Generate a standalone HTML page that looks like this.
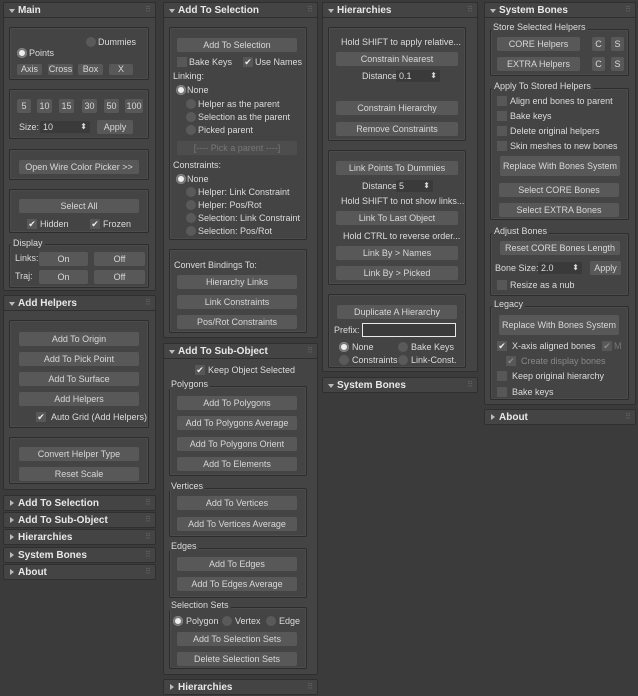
<!DOCTYPE html>
<html><head><meta charset="utf-8"><style>
*{margin:0;padding:0;box-sizing:border-box}
body{width:638px;height:696px;background:#3b3b3b;position:relative;overflow:hidden;font-family:"Liberation Sans",sans-serif;font-size:9px;color:#dcdcdc}
div{position:absolute}
.p{background:#444;border:1px solid #2f2f2f;border-radius:2px}
.h{background:#444;border:1px solid #2f2f2f;border-radius:2px;height:16px;font-weight:bold;font-size:10px;color:#e8e8e8;padding:2px 0 0 14px;white-space:nowrap}
.h:before{content:"";position:absolute;left:5px;top:6px;border-left:3px solid transparent;border-right:3px solid transparent;border-top:4px solid #bbb}
.h.c:before{left:6px;top:4px;border-top:3px solid transparent;border-bottom:3px solid transparent;border-left:4px solid #bbb;border-right:0}
.h:after{content:"⠿";position:absolute;right:4px;top:2px;font-size:8px;color:#666;font-weight:normal}
.g{border:1px solid #2c2c2c;border-radius:2px;box-shadow:inset 0 0 0 1px #4c4c4c}
.b{background:#585858;border-radius:2px;text-align:center;color:#d8d8d8;white-space:nowrap;line-height:14px;height:14px}
.dis{color:#777;background:#4d4d4d}
.t{white-space:nowrap;line-height:11px}
.r{width:10px;height:10px;border-radius:50%;background:#5a5a5a}
.r.on{background:#eee;box-shadow:0 0 0 2px #777 inset}
.k{width:10px;height:10px;background:#575757;font-size:9px;line-height:10px;text-align:center;color:#eee}
.sp{background:#3a3a3a;border-radius:1px;height:12px;line-height:12px;padding-left:3px;color:#ddd}
.sp:after{content:"⬍";position:absolute;right:3px;top:0;font-size:8px}
.lb{background:#444;padding:0 2px;line-height:10px}
</style></head><body>

<!-- column 1 -->
<div class="p" style="left:3px;top:2px;width:153px;height:289px"></div>
<div class="h" style="left:3px;top:2px;width:153px">Main</div>
<div class="g" style="left:9px;top:27px;width:140px;height:53px"></div>
<div class="r" style="left:86px;top:37px"></div><div class="t" style="left:98px;top:37px">Dummies</div>
<div class="r on" style="left:17px;top:48px"></div><div class="t" style="left:29px;top:48px">Points</div>
<div class="b" style="left:17px;top:64px;width:25px;height:11px;line-height:11px">Axis</div>
<div class="b" style="left:48px;top:64px;width:25px;height:11px;line-height:11px">Cross</div>
<div class="b" style="left:78px;top:64px;width:25px;height:11px;line-height:11px">Box</div>
<div class="b" style="left:109px;top:64px;width:24px;height:11px;line-height:11px">X</div>
<div class="g" style="left:9px;top:89px;width:140px;height:50px"></div>
<div class="b" style="left:17px;top:99px;width:14px">5</div>
<div class="b" style="left:37px;top:99px;width:15px">10</div>
<div class="b" style="left:59px;top:99px;width:15px">15</div>
<div class="b" style="left:82px;top:99px;width:15px">30</div>
<div class="b" style="left:104px;top:99px;width:15px">50</div>
<div class="b" style="left:125px;top:99px;width:18px">100</div>
<div class="t" style="left:19px;top:122px">Size:</div>
<div class="sp" style="left:40px;top:121px;width:50px">10</div>
<div class="b" style="left:97px;top:120px;width:36px">Apply</div>
<div class="g" style="left:9px;top:149px;width:140px;height:31px"></div>
<div class="b" style="left:19px;top:160px;width:120px">Open Wire Color Picker &gt;&gt;</div>
<div class="g" style="left:9px;top:189px;width:140px;height:44px"></div>
<div class="b" style="left:19px;top:199px;width:120px">Select All</div>
<div class="k" style="left:27px;top:219px">✔</div><div class="t" style="left:40px;top:219px">Hidden</div>
<div class="k" style="left:90px;top:219px">✔</div><div class="t" style="left:103px;top:219px">Frozen</div>
<div class="g" style="left:9px;top:244px;width:140px;height:44px"></div>
<div class="t lb" style="left:11px;top:238px">Display</div>
<div class="t" style="left:15px;top:253px">Links:</div>
<div class="b" style="left:39px;top:252px;width:49px">On</div>
<div class="b" style="left:94px;top:252px;width:51px">Off</div>
<div class="t" style="left:15px;top:271px">Traj:</div>
<div class="b" style="left:39px;top:270px;width:49px">On</div>
<div class="b" style="left:94px;top:270px;width:51px">Off</div>

<div class="p" style="left:3px;top:295px;width:153px;height:195px"></div>
<div class="h" style="left:3px;top:295px;width:153px">Add Helpers</div>
<div class="g" style="left:9px;top:320px;width:140px;height:108px"></div>
<div class="b" style="left:19px;top:332px;width:120px">Add To Origin</div>
<div class="b" style="left:19px;top:352px;width:120px">Add To Pick Point</div>
<div class="b" style="left:19px;top:372px;width:120px">Add To Surface</div>
<div class="b" style="left:19px;top:392px;width:120px">Add Helpers</div>
<div class="k" style="left:36px;top:412px">✔</div><div class="t" style="left:51px;top:412px">Auto Grid (Add Helpers)</div>
<div class="g" style="left:9px;top:437px;width:140px;height:47px"></div>
<div class="b" style="left:19px;top:447px;width:120px">Convert Helper Type</div>
<div class="b" style="left:19px;top:467px;width:120px">Reset Scale</div>

<div class="h c" style="left:3px;top:495px;width:153px">Add To Selection</div>
<div class="h c" style="left:3px;top:512px;width:153px">Add To Sub-Object</div>
<div class="h c" style="left:3px;top:529px;width:153px">Hierarchies</div>
<div class="h c" style="left:3px;top:547px;width:153px">System Bones</div>
<div class="h c" style="left:3px;top:564px;width:153px">About</div>

<!-- column 2 -->
<div class="p" style="left:163px;top:2px;width:155px;height:336px"></div>
<div class="h" style="left:163px;top:2px;width:155px">Add To Selection</div>
<div class="g" style="left:169px;top:27px;width:138px;height:213px"></div>
<div class="b" style="left:177px;top:38px;width:120px">Add To Selection</div>
<div class="k" style="left:177px;top:57px"></div><div class="t" style="left:189px;top:57px">Bake Keys</div>
<div class="k" style="left:243px;top:57px">✔</div><div class="t" style="left:255px;top:57px">Use Names</div>
<div class="t" style="left:173px;top:71px">Linking:</div>
<div class="r on" style="left:176px;top:85px"></div><div class="t" style="left:187px;top:85px">None</div>
<div class="r" style="left:186px;top:99px"></div><div class="t" style="left:198px;top:99px">Helper as the parent</div>
<div class="r" style="left:186px;top:112px"></div><div class="t" style="left:198px;top:112px">Selection as the parent</div>
<div class="r" style="left:186px;top:125px"></div><div class="t" style="left:198px;top:125px">Picked parent</div>
<div class="b dis" style="left:177px;top:141px;width:120px">[---- Pick a parent ----]</div>
<div class="t" style="left:173px;top:160px">Constraints:</div>
<div class="r on" style="left:176px;top:174px"></div><div class="t" style="left:187px;top:174px">None</div>
<div class="r" style="left:186px;top:187px"></div><div class="t" style="left:198px;top:187px">Helper: Link Constraint</div>
<div class="r" style="left:186px;top:200px"></div><div class="t" style="left:198px;top:200px">Helper: Pos/Rot</div>
<div class="r" style="left:186px;top:213px"></div><div class="t" style="left:198px;top:213px">Selection: Link Constraint</div>
<div class="r" style="left:186px;top:226px"></div><div class="t" style="left:198px;top:226px">Selection: Pos/Rot</div>
<div class="g" style="left:169px;top:249px;width:138px;height:84px"></div>
<div class="t" style="left:174px;top:260px">Convert Bindings To:</div>
<div class="b" style="left:177px;top:275px;width:120px">Hierarchy Links</div>
<div class="b" style="left:177px;top:295px;width:120px">Link Constraints</div>
<div class="b" style="left:177px;top:315px;width:120px">Pos/Rot Constraints</div>

<div class="p" style="left:163px;top:343px;width:155px;height:332px"></div>
<div class="h" style="left:163px;top:343px;width:155px">Add To Sub-Object</div>
<div class="k" style="left:195px;top:365px">✔</div><div class="t" style="left:208px;top:365px">Keep Object Selected</div>
<div class="g" style="left:169px;top:386px;width:138px;height:90px"></div>
<div class="t lb" style="left:169px;top:379px">Polygons</div>
<div class="b" style="left:177px;top:396px;width:120px">Add To Polygons</div>
<div class="b" style="left:177px;top:416px;width:120px">Add To Polygons Average</div>
<div class="b" style="left:177px;top:437px;width:120px">Add To Polygons Orient</div>
<div class="b" style="left:177px;top:457px;width:120px">Add To Elements</div>
<div class="g" style="left:169px;top:488px;width:138px;height:49px"></div>
<div class="t lb" style="left:169px;top:481px">Vertices</div>
<div class="b" style="left:177px;top:496px;width:120px">Add To Vertices</div>
<div class="b" style="left:177px;top:517px;width:120px">Add To Vertices Average</div>
<div class="g" style="left:169px;top:548px;width:138px;height:50px"></div>
<div class="t lb" style="left:169px;top:541px">Edges</div>
<div class="b" style="left:177px;top:557px;width:120px">Add To Edges</div>
<div class="b" style="left:177px;top:577px;width:120px">Add To Edges Average</div>
<div class="g" style="left:169px;top:607px;width:138px;height:62px"></div>
<div class="t lb" style="left:169px;top:600px">Selection Sets</div>
<div class="r on" style="left:173px;top:616px"></div><div class="t" style="left:186px;top:616px">Polygon</div>
<div class="r" style="left:222px;top:616px"></div><div class="t" style="left:235px;top:616px">Vertex</div>
<div class="r" style="left:266px;top:616px"></div><div class="t" style="left:279px;top:616px">Edge</div>
<div class="b" style="left:177px;top:632px;width:120px">Add To Selection Sets</div>
<div class="b" style="left:177px;top:652px;width:120px">Delete Selection Sets</div>
<div class="h c" style="left:163px;top:679px;width:155px">Hierarchies</div>

<!-- column 3 -->
<div class="p" style="left:322px;top:2px;width:156px;height:370px"></div>
<div class="h" style="left:322px;top:2px;width:156px">Hierarchies</div>
<div class="g" style="left:328px;top:27px;width:138px;height:114px"></div>
<div class="t" style="left:341px;top:37px">Hold SHIFT to apply relative...</div>
<div class="b" style="left:336px;top:52px;width:122px">Constrain Nearest</div>
<div class="t" style="left:362px;top:71px">Distance</div>
<div class="sp" style="left:396px;top:70px;width:44px">0.1</div>
<div class="b" style="left:336px;top:101px;width:122px">Constrain Hierarchy</div>
<div class="b" style="left:336px;top:122px;width:122px">Remove Constraints</div>
<div class="g" style="left:328px;top:150px;width:138px;height:135px"></div>
<div class="b" style="left:336px;top:161px;width:122px">Link Points To Dummies</div>
<div class="t" style="left:362px;top:181px">Distance</div>
<div class="sp" style="left:396px;top:180px;width:37px">5</div>
<div class="t" style="left:341px;top:196px">Hold SHIFT to not show links...</div>
<div class="b" style="left:336px;top:211px;width:122px">Link To Last Object</div>
<div class="t" style="left:343px;top:231px">Hold CTRL to reverse order...</div>
<div class="b" style="left:336px;top:246px;width:122px">Link By &gt; Names</div>
<div class="b" style="left:336px;top:266px;width:122px">Link By &gt; Picked</div>
<div class="g" style="left:328px;top:294px;width:138px;height:74px"></div>
<div class="b" style="left:337px;top:305px;width:120px">Duplicate A Hierarchy</div>
<div class="t" style="left:334px;top:325px">Prefix:</div>
<div style="left:362px;top:323px;width:94px;height:14px;background:#3a3a3a;border:1px solid #e8e8e8"></div>
<div class="r on" style="left:339px;top:342px"></div><div class="t" style="left:352px;top:342px">None</div>
<div class="r" style="left:398px;top:342px"></div><div class="t" style="left:411px;top:342px">Bake Keys</div>
<div class="r" style="left:339px;top:355px"></div><div class="t" style="left:352px;top:355px">Constraints</div>
<div class="r" style="left:398px;top:355px"></div><div class="t" style="left:411px;top:355px">Link-Const.</div>
<div class="h" style="left:322px;top:377px;width:156px">System Bones</div>

<!-- column 4 -->
<div class="p" style="left:484px;top:2px;width:152px;height:403px"></div>
<div class="h" style="left:484px;top:2px;width:152px">System Bones</div>
<div class="g" style="left:490px;top:29px;width:139px;height:47px"></div>
<div class="t lb" style="left:491px;top:22px">Store Selected Helpers</div>
<div class="b" style="left:497px;top:37px;width:83px">CORE Helpers</div>
<div class="b" style="left:592px;top:37px;width:13px">C</div>
<div class="b" style="left:611px;top:37px;width:13px">S</div>
<div class="b" style="left:497px;top:57px;width:83px">EXTRA Helpers</div>
<div class="b" style="left:592px;top:57px;width:13px">C</div>
<div class="b" style="left:611px;top:57px;width:13px">S</div>
<div class="g" style="left:490px;top:88px;width:139px;height:132px"></div>
<div class="t lb" style="left:492px;top:81px">Apply To Stored Helpers</div>
<div class="k" style="left:497px;top:96px"></div><div class="t" style="left:510px;top:96px">Align end bones to parent</div>
<div class="k" style="left:497px;top:111px"></div><div class="t" style="left:510px;top:111px">Bake keys</div>
<div class="k" style="left:497px;top:126px"></div><div class="t" style="left:510px;top:126px">Delete original helpers</div>
<div class="k" style="left:497px;top:141px"></div><div class="t" style="left:510px;top:141px">Skin meshes to new bones</div>
<div class="b" style="left:500px;top:156px;width:120px;height:20px;line-height:20px">Replace With Bones System</div>
<div class="b" style="left:499px;top:183px;width:120px">Select CORE Bones</div>
<div class="b" style="left:499px;top:203px;width:120px">Select EXTRA Bones</div>
<div class="g" style="left:490px;top:233px;width:139px;height:63px"></div>
<div class="t lb" style="left:492px;top:226px">Adjust Bones</div>
<div class="b" style="left:500px;top:241px;width:120px">Reset CORE Bones Length</div>
<div class="t" style="left:495px;top:263px">Bone Size:</div>
<div class="sp" style="left:538px;top:262px;width:44px">2.0</div>
<div class="b" style="left:590px;top:261px;width:31px">Apply</div>
<div class="k" style="left:497px;top:280px"></div><div class="t" style="left:510px;top:280px">Resize as a nub</div>
<div class="g" style="left:490px;top:306px;width:139px;height:94px"></div>
<div class="t lb" style="left:492px;top:299px">Legacy</div>
<div class="b" style="left:499px;top:315px;width:120px;height:20px;line-height:20px">Replace With Bones System</div>
<div class="k" style="left:497px;top:341px">✔</div><div class="t" style="left:512px;top:341px">X-axis aligned bones</div>
<div class="k" style="left:602px;top:341px;color:#888">✔</div><div class="t" style="left:614px;top:341px;color:#777">M</div>
<div class="k" style="left:506px;top:356px;color:#888">✔</div><div class="t" style="left:521px;top:356px;color:#888">Create display bones</div>
<div class="k" style="left:497px;top:371px"></div><div class="t" style="left:512px;top:371px">Keep original hierarchy</div>
<div class="k" style="left:497px;top:387px"></div><div class="t" style="left:512px;top:387px">Bake keys</div>
<div class="h c" style="left:484px;top:409px;width:152px">About</div>
</body></html>
